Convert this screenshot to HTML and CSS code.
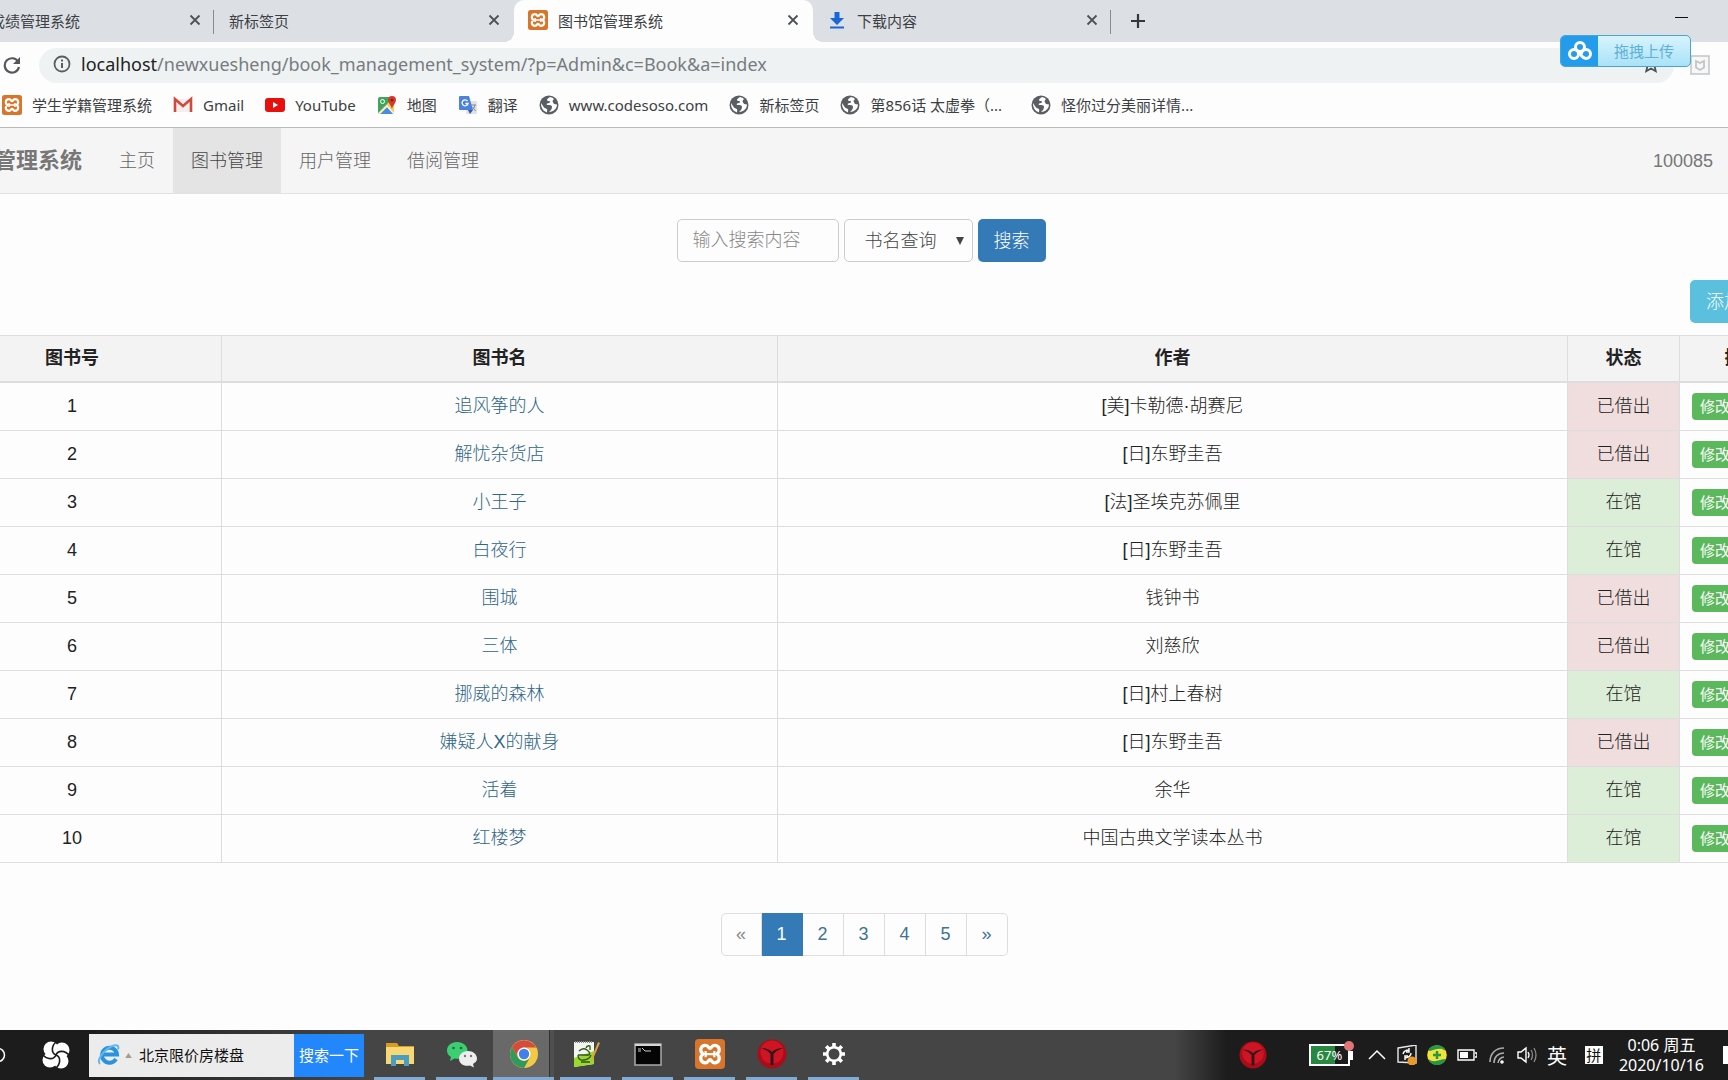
FILE: index.html
```html
<!DOCTYPE html>
<html lang="zh-CN">
<head>
  <meta charset="UTF-8">
  <title>图书馆管理系统</title>
  <link rel="stylesheet" href="styles.css">
</head>
<body>
  <svg class="defs" aria-hidden="true">
    <symbol id="i-close" viewBox="0 0 12 12"><path d="M1.5 1.5l9 9M10.5 1.5l-9 9" fill="none" stroke="#4d5256" stroke-width="1.8"/></symbol>
    <symbol id="i-xampp" viewBox="0 0 24 24">
      <rect width="24" height="24" rx="3" fill="#d9752b"/>
      <path d="M8.5 5C4 5 3.5 10 6.500 12C3.5 14 4 19 8.5 19C11 19 10.5 16.5 12 16.5S13 19 15.5 19C20 19 20.5 14 17.5 12C20.5 10 20 5 15.5 5C13 5 13.5 7.5 12 7.5S11 5 8.5 5Z" fill="none" stroke="#fff" stroke-width="2.6"/>
      <path d="M8.5 9.5v5M15.5 9.5v5M8.5 12h7" fill="none" stroke="#fff" stroke-width="1.8"/>
    </symbol>
    <symbol id="i-globe" viewBox="0 0 20 20">
      <circle cx="10" cy="10" r="9.5" fill="#5a5e62"/>
      <path d="M11 2c-3 2-4 3-2 4 2 0 3 1 1 2-2 0-3 1-2 2 3 0 5 0 5 2s-1 3-3 5c5 0 8-4 8-7.5l-3-.5c-1-2-2-2-1-4 1 0 1-1 0-2zM2 8c0 5 2 8 6 9.5 0-2 1-3-1-4-2 0-3-3-5-5.5z" fill="#fff"/>
    </symbol>
    <symbol id="i-ball" viewBox="0 0 30 30">
      <circle cx="15" cy="15" r="14.5" fill="#a80d19"/>
      <circle cx="15" cy="13" r="11.5" fill="#cf1524"/>
      <path d="M4 9q7 0 11 4Q19 9 26 9q-6 2-9.500 6V26h-3V15Q10 11 4 9z" fill="#32161a"/>
    </symbol>
  </svg>

  <div class="tab-strip">
    <div class="tab tab-cut"><span class="tab-title">成绩管理系统</span><button class="tab-close" aria-label="关闭"><svg><use href="#i-close"/></svg></button></div>
    <div class="tab"><span class="tab-title">新标签页</span><button class="tab-close" aria-label="关闭"><svg><use href="#i-close"/></svg></button></div>
    <div class="tab active"><svg class="favicon"><use href="#i-xampp"/></svg><span class="tab-title">图书馆管理系统</span><button class="tab-close" aria-label="关闭"><svg><use href="#i-close"/></svg></button></div>
    <div class="tab"><svg class="favicon" viewBox="0 0 20 20"><path d="M7.5 2h5v6H17l-7 7-7-7h4.5z" fill="#1a66d8"/><path d="M3 17.500h14" stroke="#1a66d8" stroke-width="2"/></svg><span class="tab-title">下载内容</span><button class="tab-close" aria-label="关闭"><svg><use href="#i-close"/></svg></button></div>
    <button class="tab-new" aria-label="新建标签页"><svg viewBox="0 0 16 16"><path d="M8 1v14M1 8h14" stroke="#34383c" stroke-width="2.2"/></svg></button>
    <button class="win-min" aria-label="最小化"></button>
  </div>

  <div class="toolbar">
    <button class="reload" aria-label="重新加载"><svg viewBox="0 0 18 18"><path d="M15 5.5A7.2 7.2 0 1 0 16 11" fill="none" stroke="#54585c" stroke-width="2.2"/><path d="M17 1v7h-7z" fill="#54585c"/></svg></button>
    <div class="omnibox">
      <svg class="info" viewBox="0 0 18 18"><circle cx="9" cy="9" r="7.5" fill="none" stroke="#5a5e62" stroke-width="1.8"/><path d="M9 8v5M9 4.5v2" stroke="#5a5e62" stroke-width="2"/></svg>
      <span class="url"><b>localhost</b>/newxuesheng/book_management_system/?p=Admin&amp;c=Book&amp;a=index</span>
      <svg class="star" viewBox="0 0 20 20"><path d="M10 2l2.400 5.5 6 .5-4.500 4 1.400 6L10 15l-5.300 3 1.400-6-4.500-4 6-.5z" fill="none" stroke="#4d5256" stroke-width="2"/></svg>
    </div>
    <svg class="extension" viewBox="0 0 20 20"><rect x="1" y="1" width="18" height="18" fill="#f7f7f7" stroke="#c3c5c8" stroke-width="1.5"/><path d="M6 6l4 2 4-2v6.5L10 15l-4-2.500z" fill="none" stroke="#c3c5c8" stroke-width="1.8"/></svg>
    <button class="upload">
      <span class="upload-logo"><svg viewBox="0 0 24 20" fill="none" stroke="#fff" stroke-width="3"><circle cx="12" cy="6" r="4.5"/><circle cx="6" cy="13" r="4.5"/><path d="M13.5 13a4.500 4.500 0 1 1 4.500 4.500c-4 0-5-4-8-7"/></svg></span>
      <span class="upload-text">拖拽上传</span>
    </button>
  </div>

  <nav class="bookmarks">
    <a href="#"><svg><use href="#i-xampp"/></svg>学生学籍管理系统</a>
    <a href="#"><svg viewBox="0 0 20 20"><path d="M2 4h16v13H2z" fill="#f3eeee"/><path d="M2 17V4l8 7 8-7v13" fill="none" stroke="#d4473d" stroke-width="2.6"/></svg>Gmail</a>
    <a href="#"><svg viewBox="0 0 20 20"><rect y="3" width="20" height="14" rx="3" fill="#e6100e"/><path d="M8 7l5 3-5 3z" fill="#fff"/></svg>YouTube</a>
    <a href="#"><svg viewBox="0 0 20 20"><rect x="1" y="2" width="16" height="17" rx="2" fill="#3fa55c"/><path d="M1 18L13 6l4 4v9z" fill="#f2d15a"/><path d="M3 19l7-7 7 7z" fill="#4b8be0"/><path d="M2 19l8-8 7 8" fill="none" stroke="#f3f3f3" stroke-width="1.5"/><path d="M15 14c-1-4-4-6-4-9a4 4 0 0 1 8 0c0 3-3 5-4 9z" fill="#d8392f"/><circle cx="15" cy="5" r="1.500" fill="#8b1d18"/><circle cx="5.500" cy="6.500" r="2" fill="none" stroke="#fff"/></svg>地图</a>
    <a href="#"><svg viewBox="0 0 20 20"><rect x="8" y="6" width="11" height="13" rx="1" fill="#dfe3e8"/><path d="M1 2q0-1 1-1h9l4 14H2q-1 0-1-1z" fill="#4a82dc"/><path d="M9.500 6a3 3 0 1 0 .5 2.500H7.500" fill="none" stroke="#fff" stroke-width="1.3"/><path d="M13 10h5M17 10q-1 4-3 5M14.500 12l3 4" fill="none" stroke="#7a8797"/><path d="M10 15h5l-3 4z" fill="#3058b0"/></svg>翻译</a>
    <a href="#"><svg><use href="#i-globe"/></svg>www.codesoso.com</a>
    <a href="#"><svg><use href="#i-globe"/></svg>新标签页</a>
    <a href="#" class="wide"><svg><use href="#i-globe"/></svg>第856话 太虚拳（...</a>
    <a href="#"><svg><use href="#i-globe"/></svg>怪你过分美丽详情...</a>
  </nav>

  <div class="page">
    <header class="navbar">
      <a class="brand" href="#">管理系统</a>
      <a href="#">主页</a>
      <a href="#" class="active">图书管理</a>
      <a href="#">用户管理</a>
      <a href="#">借阅管理</a>
      <span class="user">100085</span>
    </header>

    <main>
      <form class="search">
        <input type="text" class="form-control" placeholder="输入搜索内容" aria-label="搜索内容">
        <select class="form-control" aria-label="查询方式">
          <option>书名查询</option>
        </select>
        <button type="button" class="btn btn-primary">搜索</button>
      </form>
      <div class="actions"><button class="btn btn-info">添加</button></div>

      <table class="books">
        <colgroup><col class="c-id"><col class="c-name"><col><col class="c-state"><col class="c-op"></colgroup>
        <thead>
          <tr><th>图书号</th><th>图书名</th><th>作者</th><th>状态</th><th>操作</th></tr>
        </thead>
        <tbody>
          <tr><td>1</td><td><a href="#">追风筝的人</a></td><td>[美]卡勒德·胡赛尼</td><td class="danger">已借出</td><td><button class="btn-xs">修改</button></td></tr>
          <tr><td>2</td><td><a href="#">解忧杂货店</a></td><td>[日]东野圭吾</td><td class="danger">已借出</td><td><button class="btn-xs">修改</button></td></tr>
          <tr><td>3</td><td><a href="#">小王子</a></td><td>[法]圣埃克苏佩里</td><td class="success">在馆</td><td><button class="btn-xs">修改</button></td></tr>
          <tr><td>4</td><td><a href="#">白夜行</a></td><td>[日]东野圭吾</td><td class="success">在馆</td><td><button class="btn-xs">修改</button></td></tr>
          <tr><td>5</td><td><a href="#">围城</a></td><td>钱钟书</td><td class="danger">已借出</td><td><button class="btn-xs">修改</button></td></tr>
          <tr><td>6</td><td><a href="#">三体</a></td><td>刘慈欣</td><td class="danger">已借出</td><td><button class="btn-xs">修改</button></td></tr>
          <tr><td>7</td><td><a href="#">挪威的森林</a></td><td>[日]村上春树</td><td class="success">在馆</td><td><button class="btn-xs">修改</button></td></tr>
          <tr><td>8</td><td><a href="#">嫌疑人X的献身</a></td><td>[日]东野圭吾</td><td class="danger">已借出</td><td><button class="btn-xs">修改</button></td></tr>
          <tr><td>9</td><td><a href="#">活着</a></td><td>余华</td><td class="success">在馆</td><td><button class="btn-xs">修改</button></td></tr>
          <tr><td>10</td><td><a href="#">红楼梦</a></td><td>中国古典文学读本丛书</td><td class="success">在馆</td><td><button class="btn-xs">修改</button></td></tr>
        </tbody>
      </table>

      <nav class="pagination">
        <a href="#" class="edge">«</a>
        <a href="#" class="active">1</a>
        <a href="#">2</a>
        <a href="#">3</a>
        <a href="#">4</a>
        <a href="#">5</a>
        <a href="#">»</a>
      </nav>
    </main>
  </div>

  <footer class="taskbar">
    <svg class="cortana" viewBox="0 0 6 16"><path d="M-2 1.5a6 6 0 0 1 0 13" fill="none" stroke="#fff" stroke-width="1.5"/></svg>
    <button class="task-logo" aria-label="搜狗"><svg viewBox="0 0 28 28">
      <g fill="#fff"><circle cx="9" cy="8" r="7.5"/><circle cx="20" cy="9" r="7.5"/><circle cx="8" cy="19" r="7.5"/><circle cx="19" cy="20" r="7.5"/><circle cx="14" cy="14" r="6"/></g>
      <path d="M14 14C9 12 9 5 15 0M14 14C16 9 23 9 28 15M14 14C19 16 19 23 13 28M14 14C12 19 5 19 0 13" fill="none" stroke="#1c1c1c" stroke-width="1.6"/>
    </svg></button>
    <div class="ie-search">
      <svg class="ie" viewBox="0 0 24 24"><path d="M19 16a7.500 7.500 0 1 1 1-4.500H6" fill="none" stroke="#2b93de" stroke-width="4"/><path d="M3 21C-1 17 8 5 17 2.500c4-1 5 1 4 4" fill="none" stroke="#65b8ef" stroke-width="2"/></svg>
      <svg class="up" viewBox="0 0 8 6"><path d="M0 6l4-6 4 6z" fill="#a79b95"/></svg>
      <input type="text" value="北京限价房楼盘" aria-label="搜索词">
      <button>搜索一下</button>
    </div>
    <div class="tasks">
      <button aria-label="文件资源管理器"><svg viewBox="0 0 30 30"><path d="M1 4h11l2 3h15v18H1z" fill="#d99b28"/><path d="M1 8h28v17H1z" fill="#f8d775"/><path d="M6 27V16h18v11h-5v-6h-8v6z" fill="#4b9dc2"/></svg></button>
      <button aria-label="微信"><svg viewBox="0 0 30 30"><path d="M10 3C4 3 0 7 0 11.500c0 3 1.500 5 4 6.500l-1 4 4.500-2.500c8 1.500 13-3 13-8C20.500 7 16 3 10 3z" fill="#3bcf72"/><path d="M21 12c-5 0-9 3.500-9 7.500 0 5 5 8.500 11 7l4 2-1-3.500c2.500-1.500 4-3 4-5.500 0-4-4-7.500-9-7.500z" fill="#eee"/><g fill="#236b3d"><circle cx="6.500" cy="9" r="1.300"/><circle cx="14" cy="9" r="1.300"/></g><g fill="#777"><circle cx="18" cy="17" r="1.200"/><circle cx="24" cy="17" r="1.200"/></g></svg></button>
      <button class="current" aria-label="Chrome"><svg viewBox="0 0 30 30"><circle cx="15" cy="15" r="14" fill="#f3c844"/><path d="M2.900 8A14 14 0 0 1 27.100 8.500H15A7 7 0 0 0 8.900 18.500Z" fill="#d64b3c"/><path d="M2.900 8L8.900 18.500A7 7 0 0 0 21 18.500L15 29A14 14 0 0 1 2.900 8Z" fill="#2f9a5b"/><circle cx="15" cy="15" r="6.500" fill="#fff"/><circle cx="15" cy="15" r="5.200" fill="#427fe6"/></svg></button>
      <button aria-label="Notepad++"><svg viewBox="0 0 30 30"><path d="M3 3h20v22l-20 3z" fill="#f3f6ee"/><path d="M3 19l20-7v13l-20 3z" fill="#9bd82e"/><path d="M4 3h18" stroke="#8a8a8a" stroke-width="2" stroke-dasharray="1 1"/><path d="M8 12q4-4 8-1t2 5H7M7 16q0 6 6 5t7-5M15 9q1-3 4-2v4M10 23h9" fill="none" stroke="#31541b" stroke-width="1.300"/><path d="M29 4l-7 16-2 3 1-5 6-15z" fill="#dfa23a"/></svg></button>
      <button aria-label="命令提示符"><svg viewBox="0 0 30 30"><rect x="2" y="5" width="26" height="21" fill="#050505" stroke="#aaa" stroke-width="1.5"/><path d="M2 6h26" stroke="#d5d5d5" stroke-width="2"/><path d="M5 10h3M5 12h3M9 9l3 3h6" fill="none" stroke="#ccc"/></svg></button>
      <button aria-label="XAMPP"><svg><use href="#i-xampp"/></svg></button>
      <button aria-label="录屏"><svg><use href="#i-ball"/></svg></button>
      <button aria-label="设置"><svg viewBox="0 0 30 30"><circle cx="15" cy="15" r="6.800" fill="none" stroke="#fff" stroke-width="2.600"/><path d="M15 4v4M15 22v4M4 15h4M22 15h4M7.200 7.200L10 10M20 20l2.800 2.800M22.800 7.200L20 10M10 20l-2.800 2.800" stroke="#fff" stroke-width="3.600"/></svg></button>
    </div>
    <div class="tray">
      <svg class="ball" viewBox="0 0 30 30"><use href="#i-ball"/></svg>
      <div class="battery"><span>67%</span></div>
      <svg viewBox="0 0 20 20"><path d="M2 14l8-8 8 8" fill="none" stroke="#fff" stroke-width="1.5"/></svg>
      <svg viewBox="0 0 20 20"><path d="M1 3l18-3v18L1 17z" fill="none" stroke="#e8e8e8" stroke-width="1.4"/><path d="M6 9q1-4 6-4M12 3v4h-3M14 8q0 4-6 5M8 15v-4h3" fill="none" stroke="#fff" stroke-width="1.4"/><circle cx="15" cy="16" r="4.500" fill="#eb9a26"/></svg>
      <svg viewBox="0 0 20 20"><circle cx="10" cy="10" r="9.800" fill="#f3e13c"/><path d="M1 6C4-2 17-1 18.500 6 13 1 7 6 1 6zM19 14c-3 8-15 8-17.500 0 5.500 5 11.500 0 17.500 0z" fill="#259749"/><path d="M10 6v8M6 10h8" stroke="#259749" stroke-width="2.400"/></svg>
      <svg viewBox="0 0 20 20"><path d="M1 5h16v10H1zM18 8h2v4h-2" fill="none" stroke="#fff" stroke-width="1.4"/><path d="M3 7h8v6H3z" fill="#fff"/></svg>
      <svg viewBox="0 0 20 20" fill="none" stroke="#aaa" stroke-width="1.600"><path d="M3 17C3 9 8 3 17 3M7 18c0-6 4-10 10-10M11 18c0-3 3-6 6-6"/><circle cx="15" cy="17" r="1" stroke="#fff"/></svg>
      <svg viewBox="0 0 20 20" fill="none"><path d="M1 7h3l5-4v14l-5-4H1z" stroke="#fff" stroke-width="1.4"/><path d="M11 7q2 3 0 6" stroke="#fff" stroke-width="1.3"/><path d="M14 5q3 5 0 10M17 3q4 7 0 14" stroke="#888" stroke-width="1.3"/></svg>
      <span class="lang">英</span>
      <span class="ime">拼</span>
      <time class="clock">0:06 周五<br>2020/10/16</time>
      <span class="notice"></span>
    </div>
  </footer>
</body>
</html>
```
FILE: styles.css
```css
* {
  box-sizing: border-box;
}
body {
  margin: 0;
  min-height: 100vh;
  display: flex;
  flex-direction: column;
  overflow-x: hidden;
  background: #fdfdfd;
  color: #222;
  font-family: "Noto Sans", "Noto Sans CJK SC", sans-serif;
  font-size: 15px;
}
a {
  text-decoration: none;
}
button,
input,
select {
  font: inherit;
}
button {
  border: none;
  padding: 0;
  background: none;
  cursor: pointer;
}
.defs {
  display: none;
}

/* browser tabs */
.tab-strip {
  display: flex;
  height: 42px;
  margin-left: -84px;
  background: #dce0e5;
}
.tab {
  position: relative;
  display: flex;
  align-items: center;
  width: 299px;
  padding: 0 14px 2px;
  color: #3c4043;
}
.tab-cut {
  padding-left: 74px;
}
.tab:not(.active)::after {
  content: "";
  position: absolute;
  right: 1px;
  top: 10px;
  width: 1px;
  height: 24px;
  background: #868b90;
}
.tab:nth-child(2)::after {
  display: none;
}
.tab.active {
  background: #fdfdfd;
  border-radius: 10px 10px 0 0;
}
.tab.active::before,
.tab.active::after {
  content: "";
  position: absolute;
  bottom: 0;
  width: 10px;
  height: 10px;
}
.tab.active::before {
  left: -10px;
  background: radial-gradient(circle at 0 0, transparent 10px, #fdfdfd 10px);
}
.tab.active::after {
  right: -10px;
  background: radial-gradient(circle at 100% 0, transparent 10px, #fdfdfd 10px);
}
.favicon {
  width: 20px;
  height: 20px;
  margin-right: 10px;
}
.tab-title {
  flex: 1;
}
.tab-close svg {
  display: block;
  width: 12px;
  height: 12px;
}
.tab-new {
  margin-left: 18px;
}
.tab-new svg {
  display: block;
  width: 16px;
  height: 16px;
}
.win-min {
  width: 13px;
  height: 1px;
  margin: 17px 40px 0 auto;
  background: #111;
}

/* address bar */
.toolbar {
  position: relative;
  display: flex;
  align-items: center;
  height: 46px;
  padding: 0 18px 0 3px;
}
.reload svg {
  display: block;
  width: 18px;
  height: 18px;
}
.omnibox {
  flex: 1;
  display: flex;
  align-items: center;
  height: 35px;
  margin: 0 16px 0 18px;
  padding: 0 14px 2px;
  border-radius: 18px;
  background: #eff2f3;
}
.info {
  width: 18px;
  height: 18px;
  margin-right: 10px;
}
.url {
  flex: 1;
  font-size: 18px;
  color: #777c80;
}
.url b {
  font-weight: normal;
  color: #222;
}
.star {
  width: 18px;
  height: 18px;
}
.extension {
  width: 20px;
  height: 20px;
}
.upload {
  position: absolute;
  right: 37px;
  top: -7px;
  display: flex;
  width: 131px;
  height: 32px;
  border: 1px solid #4ba3cf;
  border-radius: 5px;
  overflow: hidden;
  background: linear-gradient(#d8f4fd, #a9e2f8);
  color: #5fb0d6;
}
.upload-logo {
  display: flex;
  align-items: center;
  justify-content: center;
  width: 37px;
  height: 100%;
  background: #239cec;
}
.upload-logo svg {
  width: 24px;
  height: 20px;
}
.upload-text {
  flex: 1;
  line-height: 30px;
}

/* bookmarks */
.bookmarks {
  display: flex;
  align-items: center;
  gap: 21px;
  height: 40px;
  padding: 0 2px 6px;
  border-bottom: 1px solid #b9bbb9;
}
.bookmarks a {
  display: flex;
  align-items: center;
  gap: 10px;
  white-space: nowrap;
  color: #3c4043;
}
.bookmarks svg {
  width: 20px;
  height: 20px;
}
.bookmarks .wide {
  margin-right: 8px;
}

/* page, wider than the window on both sides */
.page {
  flex: 1;
  margin: 0 -78px;
  font-family: "Liberation Sans", "Noto Sans CJK SC", sans-serif;
  font-size: 18px;
  font-weight: 300;
}
.navbar {
  display: flex;
  height: 66px;
  padding: 0 93px 0 72px;
  line-height: 66px;
  background: #f5f5f5;
  border-bottom: 1px solid #e2e2e2;
}
.navbar a {
  padding: 0 18px;
  color: #666;
}
.navbar .brand {
  padding: 0 19px 0 0;
  font-size: 22px;
  font-weight: bold;
  color: #777;
}
.navbar .active {
  background: #e4e4e4;
  color: #444;
}
.user {
  margin-left: auto;
  color: #777;
}
.search {
  display: flex;
  justify-content: center;
  gap: 5px;
  padding: 25px 6px 18px 0;
}
.form-control {
  height: 43px;
  border: 1px solid #ccc;
  border-radius: 5px;
  background: #fdfdfd;
  color: #444;
}
input.form-control {
  width: 162px;
  padding: 0 15px;
}
input.form-control::placeholder {
  color: #888;
}
select.form-control {
  width: 129px;
  padding: 0 20px;
  appearance: none;
  background: #fdfdfd url("data:image/svg+xml,%3Csvg xmlns='http://www.w3.org/2000/svg' viewBox='0 0 8 8'%3E%3Cpath d='M0 0h8L4 8z' fill='%23444'/%3E%3C/svg%3E") no-repeat right 8px center / 8px 8px;
}
.btn {
  height: 43px;
  padding: 0 16px 4px;
  border-radius: 5px;
  color: #fff;
}
.btn-primary {
  background: #337ab7;
}
.btn-info {
  background: #5bc0de;
}
.actions {
  display: flex;
  justify-content: flex-end;
  padding: 0 48px 12px;
}
.books {
  width: 100%;
  table-layout: fixed;
  border-collapse: collapse;
  line-height: 27px;
  text-align: center;
}
.c-id {
  width: 299px;
}
.c-name {
  width: 556px;
}
.c-state {
  width: 112px;
}
.c-op {
  width: 126px;
}
.books th,
.books td {
  padding: 10px 12px;
  border: 1px solid #ddd;
}
.books th {
  padding: 9px 12px;
  background: #f3f3f3;
  border-bottom-width: 2px;
  font-weight: bold;
}
.books a {
  color: #2f6586;
}
.books .danger {
  background: #f0dedf;
}
.books .success {
  background: #dceed7;
}
.btn-xs {
  display: block;
  height: 27px;
  padding: 0 8px;
  border-radius: 4px;
  background: #5cb85c;
  color: #fff;
  font-size: 15px;
  font-weight: 400;
  line-height: 26px;
}
.pagination {
  display: flex;
  justify-content: center;
  margin: 50px 0;
}
.pagination a {
  width: 41px;
  height: 43px;
  border: 1px solid #ddd;
  border-left: none;
  line-height: 41px;
  text-align: center;
  color: #3d7396;
}
.pagination .edge {
  border-left: 1px solid #ddd;
  border-radius: 5px 0 0 5px;
  color: #888;
}
.pagination a:last-child {
  border-radius: 0 5px 5px 0;
}
.pagination .active {
  background: #337ab7;
  border-color: #337ab7;
  color: #fff;
}

/* taskbar */
.taskbar {
  display: flex;
  align-items: center;
  height: 50px;
  background: linear-gradient(90deg, #1c1c1c 5%, #454545 21%, #454545 68%, #1c1c1c 71%);
  color: #fff;
}
.cortana {
  width: 6px;
  height: 16px;
}
.task-logo {
  margin: 0 19px 0 36px;
}
.task-logo svg {
  display: block;
  width: 28px;
  height: 28px;
}
.ie-search {
  display: flex;
  align-items: center;
  height: 43px;
  padding-left: 8px;
  background: #ececec;
}
.ie {
  width: 24px;
  height: 24px;
}
.up {
  width: 7px;
  height: 5px;
  margin: 0 7px 0 4px;
}
.ie-search input {
  width: 155px;
  padding: 0 0 2px;
  border: none;
  background: none;
  color: #111;
}
.ie-search button {
  width: 70px;
  height: 100%;
  padding-bottom: 2px;
  background: #2287fb;
  color: #fff;
}
.tasks {
  display: flex;
  gap: 11px;
  height: 100%;
  margin-left: 10px;
}
.tasks button {
  display: flex;
  align-items: center;
  justify-content: center;
  width: 51px;
  border-bottom: 3px solid #80acd3;
}
.tasks .current {
  width: 61px;
  margin: 0 -5px;
  background: linear-gradient(90deg, #696969 56px, #333 56px, #333 57px, #505050 57px);
}
.tasks svg {
  width: 30px;
  height: 30px;
}
.tray {
  display: flex;
  align-items: center;
  gap: 10px;
  height: 100%;
  margin-left: auto;
}
.tray svg {
  width: 20px;
  height: 20px;
}
.tray .ball {
  width: 28px;
  height: 28px;
  margin-right: 32px;
}
.battery {
  position: relative;
  width: 41px;
  height: 22px;
  margin-right: 7px;
  border: 2px solid #fff;
  background: linear-gradient(90deg, #26893f 66%, #1c1c1c 66%);
  font-size: 13px;
  line-height: 18px;
  text-align: center;
}
.battery::before {
  content: "";
  position: absolute;
  right: -5px;
  top: 5px;
  width: 3px;
  height: 9px;
  background: #fff;
}
.battery::after {
  content: "";
  position: absolute;
  right: -6px;
  top: -5px;
  width: 10px;
  height: 10px;
  border-radius: 50%;
  background: #e07575;
}
.lang {
  font-size: 20px;
}
.ime {
  width: 18px;
  height: 18px;
  margin-left: 8px;
  background: #fff;
  color: #111;
  line-height: 18px;
  text-align: center;
}
.clock {
  margin-left: 6px;
  font-size: 16px;
  line-height: 20px;
  text-align: center;
}
.notice {
  width: 5px;
  height: 18px;
  margin-left: 9px;
  background: #fff;
}
```
